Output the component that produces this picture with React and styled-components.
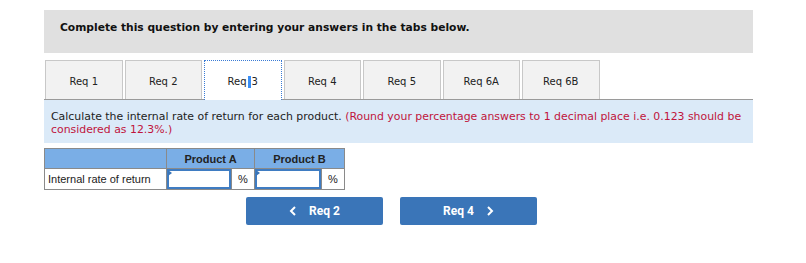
import styled, { createGlobalStyle } from "styled-components";

const Global = createGlobalStyle`
  body {
    margin: 0;
    background: #fff;
    font-family: "DejaVu Sans", Verdana, sans-serif;
  }
`;

const Page = styled.div`
  width: 709px;
  margin-left: 44px;
  padding-top: 10px;
`;

const Header = styled.div`
  box-sizing: border-box;
  background: #e0e0e0;
  height: 43px;
  padding: 11px 0 0 16px;
  line-height: 14px;
  font-weight: bold;
  font-size: 10.7px;
  color: #111;
`;

const TabBar = styled.div`
  display: flex;
  gap: 2px;
  margin-top: 7px;
  padding-left: 1px;
  height: 39px;
  border-bottom: 1px solid #9a9a9a;
`;

const Tab = styled.div`
  box-sizing: border-box;
  width: 77.5px;
  display: flex;
  align-items: center;
  justify-content: center;
  padding-top: 2px;
  font-size: 10px;
  color: #222;
  background: ${(p) => (p.$active ? "#fff" : "#f2f2f2")};
  border: ${(p) => (p.$active ? "1px dotted #3a7bd5" : "1px solid #c8c8c8")};
  border-bottom: none;
  margin-bottom: ${(p) => (p.$active ? "-1px" : "0")};
  height: ${(p) => (p.$active ? "40px" : "39px")};
`;

const Caret = styled.span`
  display: inline-block;
  width: 3px;
  height: 12px;
  background: #3a8ef5;
  margin: 0 1px;
  vertical-align: -2px;
`;

const Instructions = styled.div`
  background: #dbeaf8;
  padding: 10px 0 7px 7px;
  font-size: 10.9px;
  line-height: 13px;
  color: #222;
  height: 26px;
`;

const Red = styled.span`
  color: #c0143c;
`;

const Table = styled.table`
  margin-top: 5px;
  border-collapse: collapse;
  font-family: "Liberation Sans", Arial, sans-serif;
  font-size: 11px;
  color: #222;
`;

const HeadCell = styled.th`
  background: #7aaee6;
  border: 1px solid #8a8a8a;
  height: 19px;
  padding: 0;
  font-weight: bold;
  text-align: center;
  width: ${(p) => p.$w}px;
`;

const Cell = styled.td`
  border: 1px solid #8a8a8a;
  height: 20px;
  padding: 0 3px;
  width: ${(p) => p.$w}px;
  box-sizing: border-box;
`;

const InputCell = styled.td`
  border: 1px solid #8a8a8a;
  padding: 0;
  height: 20px;
  position: relative;
`;

const Input = styled.div`
  box-sizing: border-box;
  width: ${(p) => p.$w}px;
  height: 20px;
  border: 2px solid #3f7cc2;
  background: #fff;
`;

const Flag = styled.div`
  position: absolute;
  left: 1px;
  top: 1px;
  width: 0;
  height: 0;
  border-top: 3px solid transparent;
  border-bottom: 3px solid transparent;
  border-left: 4px solid #3a75b8;
`;

const Pct = styled.td`
  border: 1px solid #8a8a8a;
  padding: 0;
  text-align: center;
  width: 22px;
`;

const Nav = styled.div`
  display: flex;
  gap: 17px;
  margin-top: 7px;
  padding-left: 202px;
`;

const NavButton = styled.div`
  width: 137px;
  height: 28px;
  background: #3a75b8;
  border-radius: 2px;
  display: flex;
  align-items: center;
  justify-content: center;
  gap: 12px;
  color: #fff;
  font-family: Roboto, "Liberation Sans", sans-serif;
  font-weight: bold;
  font-size: 12px;
`;

const Chevron = ({ dir }) => (
  <svg width="8" height="10" viewBox="0 0 8 10">
    <path
      d={dir === "left" ? "M6 1 L2 5 L6 9" : "M2 1 L6 5 L2 9"}
      fill="none"
      stroke="#fff"
      strokeWidth="2"
    />
  </svg>
);

const tabs = ["Req 1", "Req 2", "Req 3", "Req 4", "Req 5", "Req 6A", "Req 6B"];

export default function App() {
  return (
    <>
      <Global />
      <Page>
        <Header>Complete this question by entering your answers in the tabs below.</Header>
        <TabBar>
          {tabs.map((t) =>
            t === "Req 3" ? (
              <Tab key={t} $active>
                Req<Caret />3
              </Tab>
            ) : (
              <Tab key={t}>{t}</Tab>
            )
          )}
        </TabBar>
        <Instructions>
          Calculate the internal rate of return for each product.{" "}
          <Red>
            (Round your percentage answers to 1 decimal place i.e. 0.123 should be considered as 12.3%.)
          </Red>
        </Instructions>
        <Table>
          <thead>
            <tr>
              <HeadCell $w={121}></HeadCell>
              <HeadCell colSpan={2}>Product A</HeadCell>
              <HeadCell colSpan={2}>Product B</HeadCell>
            </tr>
          </thead>
          <tbody>
            <tr>
              <Cell $w={122}>Internal rate of return</Cell>
              <InputCell>
                <Input $w={64} />
                <Flag />
              </InputCell>
              <Pct>%</Pct>
              <InputCell>
                <Input $w={66} />
                <Flag />
              </InputCell>
              <Pct>%</Pct>
            </tr>
          </tbody>
        </Table>
        <Nav>
          <NavButton>
            <Chevron dir="left" />
            Req 2
          </NavButton>
          <NavButton>
            Req 4
            <Chevron dir="right" />
          </NavButton>
        </Nav>
      </Page>
    </>
  );
}
